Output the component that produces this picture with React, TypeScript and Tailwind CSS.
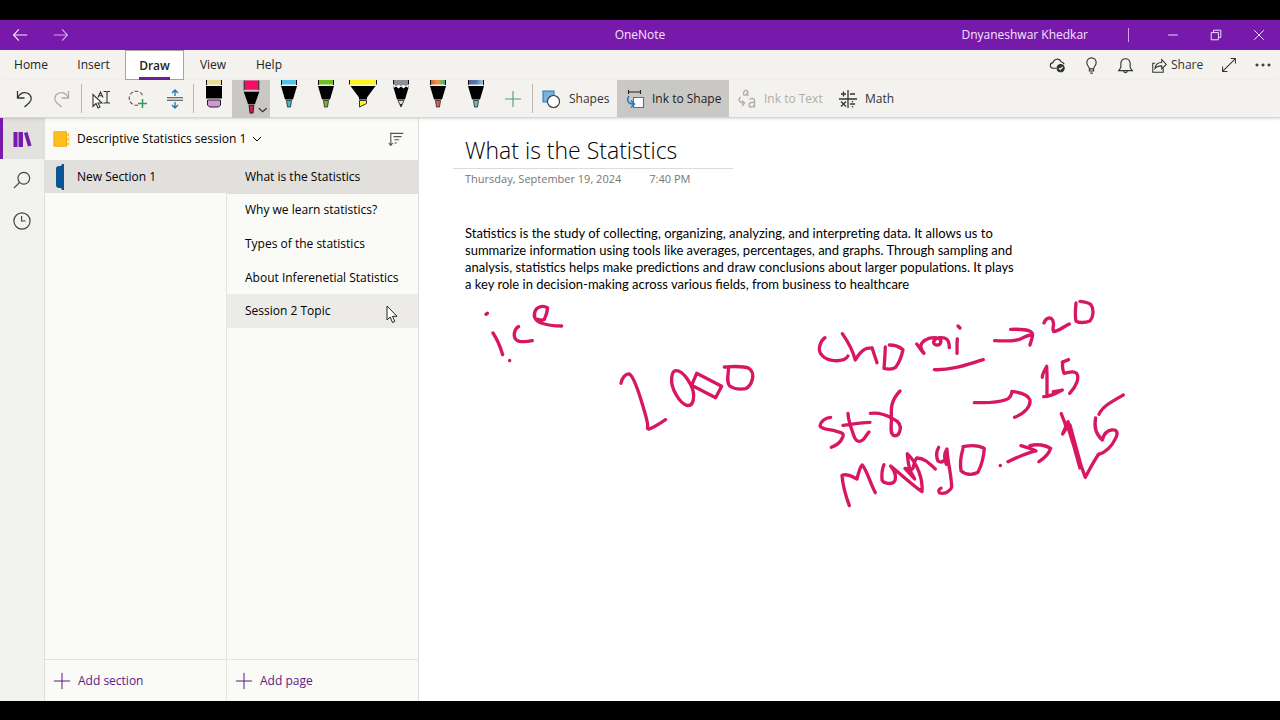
import { useState } from 'react';
import type { ReactNode } from 'react';

const tabs = [
  { label: 'Home', width: 'w-[62px]' },
  { label: 'Insert', width: 'w-[63px]' },
  { label: 'Draw', width: 'w-[59px]' },
  { label: 'View', width: 'w-[58px]' },
  { label: 'Help', width: 'w-[54px]' },
];

const pages = [
  'What is the Statistics',
  'Why we learn statistics?',
  'Types of the statistics',
  'About Inferenetial Statistics',
  'Session 2 Topic',
];

const pens = [
  { name: 'Blue pen', color: '#4fc3e8', tip: '#45b5d0' },
  { name: 'Green pen', color: '#6cc024', tip: '#7cb342' },
  { name: 'Highlighter', color: '#fdf51c', tip: '#fdf51c' },
  { name: 'Pencil', color: '#8a9096', tip: '#555555' },
  { name: 'Rainbow pen', color: 'url(#rainbow)', tip: '#d4644a' },
  { name: 'Galaxy pen', color: 'url(#galaxy)', tip: '#6fb9bd' },
];

interface IconProps {
  size?: number;
  width?: number;
  children: ReactNode;
}

function Icon({ size = 20, width = 1.1, children }: IconProps) {
  return (
    <svg
      width={size}
      height={size}
      viewBox="0 0 20 20"
      fill="none"
      stroke="currentColor"
      strokeWidth={width}
      className="shrink-0"
      aria-hidden="true"
    >
      {children}
    </svg>
  );
}

function Tool({ label, children, className = '' }: { label: string; children: ReactNode; className?: string }) {
  return (
    <button aria-label={label} className={`flex h-full items-center justify-center ${className}`}>
      {children}
    </button>
  );
}

function Pen({ name, color, tip }: { name: string; color: string; tip: string }) {
  const wide = name === 'Highlighter';
  return (
    <svg width="28" height="38" viewBox="0 0 28 38" aria-hidden="true">
      {wide ? (
        <>
          <path d="M1 0h26v4.500H1z" fill={color} />
          <path d="M.5 0v4.500M27.500 0v4.500" stroke="#111" />
          <path d="M1.500 6h25L18 17.500v2h-8v-2z" fill="#000" />
          <path d="M10.500 20.500h7v3l-7 3.500z" fill={color} stroke="#333" />
        </>
      ) : (
        <>
          <path d="M7 0h14v4.500H7z" fill={color} />
          <path d="M6.500 0v5M21.500 0v5" stroke="#111" />
          <path d="M6 6h16l-4 13.500h-8z" fill="#000" />
          {name === 'Pencil' ? (
            <>
              <path d="M6.500 4h15v4L19 6.500 16.500 8.500 14 6.500l-2.500 2L9 6.500 6.500 8z" fill="#fff" />
              <path d="M7 0h14v5l-2 1-2.500-1L14 6l-2.500-1L9 6 7 5z" fill={color} />
              <path d="M11 20.500h6L14 27z" fill="#ddd" stroke="#444" />
              <path d="M13 24h2l-1 3z" fill="#111" />
            </>
          ) : (
            <path d="M11.500 20.500h5l-1 6.500h-3z" fill={tip} stroke="#222" strokeWidth=".8" />
          )}
        </>
      )}
    </svg>
  );
}

function Ribbon() {
  return (
    <div className="relative z-10 flex h-[38px] shrink-0 items-stretch border-b border-[#d6d6d3] bg-[#f3f2ef] pl-[5px] text-[#333] shadow-sm">
      <svg width="0" height="0" className="absolute" aria-hidden="true">
        <linearGradient id="rainbow">
          <stop offset="0" stopColor="#d95c50" />
          <stop offset=".5" stopColor="#e5a13c" />
          <stop offset="1" stopColor="#37a98c" />
        </linearGradient>
        <linearGradient id="galaxy">
          <stop offset="0" stopColor="#6a5c9e" />
          <stop offset=".5" stopColor="#4e78b4" />
          <stop offset="1" stopColor="#a8c6d8" />
        </linearGradient>
      </svg>
      <Tool label="Undo" className="w-[38px]">
        <Icon width={1.3}>
          <path d="M3.500 2v7h7M3.800 8.500C6 4.500 9.500 2.800 13 4c4.500 1.700 5.500 6.500 2.500 9.500L10.500 18" />
        </Icon>
      </Tool>
      <Tool label="Redo" className="w-[38px] text-[#ababab]">
        <Icon width={1.3}>
          <path d="M16.500 2v7h-7M16.200 8.500C14 4.500 10.500 2.800 7 4c-4.500 1.700-5.500 6.500-2.500 9.500L9.500 18" />
        </Icon>
      </Tool>
      <div className="my-1 w-px bg-[#b8b8b5]" />
      <Tool label="Select objects or type text" className="w-[37px]">
        <Icon>
          <path d="M2 5.500v12l3-3 2 4.500 2-1-2-4h4z" fill="#fff" />
          <path d="M7 8.500L9.500 3l2.500 5.500M8 6.800h3M12.500 2.500H15l1 .8.800-.8H19M16 3.300v9.900M12.500 14H15l1-.8.800.8H19" />
        </Icon>
      </Tool>
      <Tool label="Lasso select" className="w-[37px]">
        <Icon>
          <path d="M10 16A7 7 0 1 1 15 7.500" stroke="#555" strokeDasharray="3.500 2" />
          <path d="M14.500 10v9M10 14.500h9" stroke="#35955a" strokeWidth="1.500" />
        </Icon>
      </Tool>
      <Tool label="Insert space" className="w-[37px]">
        <Icon>
          <path d="M2 8.800h16M2 11.200h16" stroke="#444" />
          <path d="M10 7V1.500M7 4l3-3 3 3M10 13v5.500M7 16l3 3 3-3" stroke="#1878b4" strokeWidth="1.300" />
        </Icon>
      </Tool>
      <div className="my-1 mr-px w-px bg-[#b8b8b5]" />
      <div className="grid w-[337px] grid-cols-9">
        <Tool label="Eraser">
          <svg width="28" height="38" viewBox="0 0 28 38" aria-hidden="true">
            <path d="M7 0h14v4.500H7z" fill="#eadb9a" />
            <path d="M6.500 0v5M21.500 0v5" stroke="#111" />
            <path d="M6 6h16v12.500H6z" fill="#000" />
            <path d="M7.500 20h13v5l-2 2h-9l-2-2z" fill="#d594d3" stroke="#222" />
          </svg>
        </Tool>
        <Tool label="Red pen" className="bg-[#c9c8c5]">
          <svg width="37" height="38" viewBox="0 0 38 38" aria-hidden="true">
            <path d="M12 0h14v9.500H12z" fill="#f80a67" />
            <path d="M11.500 0v10M26.500 0v10" stroke="#111" />
            <path d="M11 11.500h16L22.500 24.500h-7z" fill="#000" />
            <path d="M16.500 25.500h5l-1 8h-3z" fill="#c51f4f" stroke="#222" />
            <path d="M26.500 28.500l4 3.500 4-3.500" fill="none" stroke="#333" strokeWidth="1.300" />
          </svg>
        </Tool>
        {pens.map((pen) => (
          <Tool key={pen.name} label={pen.name}>
            <Pen {...pen} />
          </Tool>
        ))}
        <Tool label="Add pen" className="text-[#4f9c70]">
          <Icon>
            <path d="M10 2v16M2 10h16" />
          </Icon>
        </Tool>
      </div>
      <div className="my-1 w-px bg-[#b8b8b5]" />
      <button className="flex w-[84px] items-center gap-2 pl-2">
        <Icon>
          <path d="M2 2h11v11H2z" fill="#78b3dc" stroke="#2b7cb8" />
          <circle cx="12.500" cy="12.500" r="6" fill="#fff" />
        </Icon>
        Shapes
      </button>
      <button className="flex w-[112px] items-center gap-[7px] bg-[#c9c8c5] pl-2 text-[#222]">
        <Icon>
          <path d="M3.500 3h12M3.500 1v4M15.500 1v4" />
          <path d="M8.500 8.500h10v10h-10z" fill="#fff" stroke="#2b7cb8" />
          <path d="M4 7c-3 4-1 8 5 8M6 11.500L9.500 15 6 18.500" stroke="#2b7cb8" strokeWidth="1.500" />
        </Icon>
        Ink to Shape
      </button>
      <button className="flex w-[101px] items-center gap-[7px] pl-2 text-[#adadad]">
        <Icon width={1.4}>
          <path d="M11 3C9-.5 6.500 2 6.500 4.500s2 2.500 3.500 0l1-2.500-.8 4 1.300.5M3.500 8c-3 3-1 6 3.500 6M5 11.500L7.500 14 5 17M12.500 10.500c2-2 5-1 5 1v7M17.500 13.500c-4-.5-5.500.5-5.500 2.300 0 3 4 2.700 5.500.5" />
        </Icon>
        Ink to Text
      </button>
      <button className="flex items-center gap-[7px] pl-2">
        <Icon width={1.3}>
          <path d="M10 1v18M1 10h18M3 5h5M5.500 2.500v5M12 5h5M3 12.500l5 5M8 12.500l-5 5M12 15h5M14.500 12v1.200M14.500 17v1.200" />
        </Icon>
        Math
      </button>
    </div>
  );
}

// Ink keeps the coordinates of the pen strokes, three units to a pixel.
function Ink() {
  return (
    <svg
      width="861"
      height="583"
      viewBox="419 118 861 583"
      className="pointer-events-none absolute top-0 left-0"
      fill="none"
      stroke="#d81763"
      strokeWidth="10"
      strokeLinecap="round"
      strokeLinejoin="round"
      role="img"
      aria-label="Ink drawing"
    >
      <g transform="translate(470 290) scale(.3333)">
        <path d="M48 73l4-3M69 129c12 18 20 35 29 65M119 211v1" />
        <path d="M146 110c-10 3-17 23-11 35 8 13 33 11 52 7" />
        <path d="M203 88c10 3 15 4 20 0 5-11 9-24 10-34-12-8-30-6-37 8-7 16-2 30 17 37 20 7 38 9 62 9" />
        <path d="M453 280c2-16 15-30 25-28 20 10 55 144 55 154 0 7-3 12 5 11 14-5 30-16 49-28" />
        <path d="M618 242c24 0 53 48 53 75 0 22-6 30-18 30-26-7-51-55-48-82 1-13 4-23 13-23z" />
        <path d="M680 250l75 39-18 34-72-37zM763 231c18-1 53-5 74 4 23 16 7 53-10 61-18 3-38-1-48-8-10-13-5-30-3-52" />
      </g>
      <g transform="translate(800 290) scale(.3333)">
        <path d="M584 152c37 2 69-1 79-6 13-6 19-10 30-11M632 118c28-1 47 1 57 5 18 7 3 29 1 42M732 99c6-17 21-18 25-10 10 15-3 24 4 36 14-1 29-14 47-23M828 39c-1 18-4 36 0 54 7 7 29 5 42 0 9-10 14-35 2-50-9-7-20-8-32-9" />
        <path d="M727 262c-1-8 8-22 13-33 2 22 1 57 1 90M731 320c14 0 29-5 56-20M760 305l20-3M787 217l19-8M789 215c-4 13-2 20 3 35 13-2 28-10 38 0 10 15-3 41-21 60" />
        <path d="M523 338c51 1 85-2 103-13 10-9 8-14 10-21 22 3 49 10 54 26 2 18-13 39-46 52" />
      </g>
      <g transform="translate(815 325) scale(.3333)">
        <path d="M30 38c-14 10-22 34-13 48 14 21 46 25 69 18 8-4 11-6 13-11M82 26c14 20 31 49 39 79 8-14 15-26 30-33 8-4 15-1 20-4l15 45" />
        <path d="M211 66c-1 24-2 45-4 64 12 3 28 2 35-3 11-15 18-33 22-53-12-10-26-14-41-14" />
        <path d="M305 57c8 7 12 20 22 28-8-11-13-21-7-30 12-15 34-21 52-15 11 8 4 22-7 20-15-2-11-19 8-22 20-2 30 4 30 30M427 42c-2 15 0 28-1 43M429 3l6 6M358 134c54 2 96-15 147-30" />
        <path d="M47 277c-17 1-31 14-32 26 6 12 29 9 50 16 17 4 24 7 17 20-5 12-18 22-33 28M99 265c1 24 10 44 17 66 5 16 15 24 28 13 9-8 11-17 18-23M84 301c24-2 50-9 81-9M166 265c22-3 45 3 65 15 20 9 28 21 24 36-3 13-8 18-18 16-11-5-9-21-8-38 2-32-9-60 26-96" />
        <path d="M103 542c-12-33-20-62-22-91 20-7 32 5 45 11 4-17 9-38 16-42 15 18 24 57 39 83M207 419c-6 13-7 31-6 46 6 12 29 13 36 6 7-8 7-30-10-48 31 25 63 56 94 77 3-36-12-82-44-114 2 25 4 49 22 76l-29-32c11 2 18 8 24 0 3-11 5-24 11-31 23-1 40 18 56 33" />
        <path d="M371 367c-9 15-7 29-2 41 11 8 22-1 27-15v-20c2 39 14 81 14 114-6 14-23 21-36 17-4-6-4-10 4-14M396 372c-12 17-6 31-2 46" />
        <path d="M444 371c-7 23-9 46-6 66 12 13 35 14 51 5 12-24 17-45 19-72-17-10-39-10-64-5" />
      </g>
      <g transform="translate(800 390) scale(.3333)">
        <path d="M601 226v1M624 215c32-15 61-27 84-32-14-8-29-11-45-16M690 167c22-6 47-2 62 8-5 17-16 28-35 40" />
        <path d="M784 71c6 18 14 31 14 43-2 8-7 12-10 18l13-30c14 43 29 94 39 132M804 95c13 49 30 109 52 167 14-26 25-48 40-69M810 105l34 125" />
        <path d="M887 84c-5 25 1 49 20 66 4-16 14-28 27-30 19-3 20 10 14 23-11 24-28 43-53 51M897 73c10-23 36-37 73-58" />
      </g>
    </svg>
  );
}

export default function App() {
  const [activeTab, setActiveTab] = useState('Draw');
  const [activePage, setActivePage] = useState(pages[0]);

  return (
    <div className="flex h-screen flex-col overflow-hidden bg-black pt-5 pb-[19px] font-['Open_Sans',sans-serif] text-xs text-[#222]">
      <header className="relative flex h-[30px] shrink-0 items-center bg-[#7719aa] text-[#f5e4ff]">
        <Tool label="Back" className="w-10">
          <Icon size={16}>
            <path d="M19 10H2M8.500 3L2 10l6.500 7" strokeWidth="1.500" />
          </Icon>
        </Tool>
        <Tool label="Forward" className="w-[42px] text-[#d7a5ef]">
          <Icon size={16}>
            <path d="M1 10h17M11.500 3l6.500 7-6.500 7" strokeWidth="1.500" />
          </Icon>
        </Tool>
        <h1 className="absolute left-1/2 -translate-x-1/2">OneNote</h1>
        <span className="ml-auto">Dnyaneshwar Khedkar</span>
        <div className="mr-[22px] ml-10 h-3.5 w-px bg-[#d7a5ef]" />
        <Tool label="Minimize" className="w-[43px]">
          <Icon size={12}>
            <path d="M2 10h16" strokeWidth="1.600" />
          </Icon>
        </Tool>
        <Tool label="Restore" className="w-[43px]">
          <Icon size={12}>
            <path d="M2 6h12v12H2zM6 6V2h12v12h-4" strokeWidth="1.600" />
          </Icon>
        </Tool>
        <Tool label="Close" className="w-[43px]">
          <Icon size={12}>
            <path d="M2 2l16 16M18 2L2 18" strokeWidth="1.600" />
          </Icon>
        </Tool>
      </header>

      <nav className="flex h-[30px] shrink-0 items-stretch bg-[#f3f2ef]">
        {tabs.map((tab) => (
          <button
            key={tab.label}
            onClick={() => setActiveTab(tab.label)}
            className={`${tab.width} ${
              tab.label === activeTab ? 'border border-[#a5a5a5] bg-white font-semibold' : ''
            } flex items-center justify-center`}
          >
            <span className={tab.label === activeTab ? 'border-b-3 border-[#6b1f9c] pt-1 leading-[23px]' : ''}>
              {tab.label}
            </span>
          </button>
        ))}
        <div className="ml-auto flex items-center text-[#333]">
          <Tool label="Sync" className="w-[34px]">
            <Icon size={16} width={1.4}>
              <path d="M9 14H5c-4.500-.5-4.500-6.500 0-7C6 2 13 1 15 6c2 .3 3.500 1.500 4 3" />
              <circle cx="14.500" cy="14" r="4.500" fill="#333" />
              <path d="M12.500 14l1.500 1.500 3-3" stroke="#fff" />
            </Icon>
          </Tool>
          <Tool label="Tell me" className="w-[34px]">
            <Icon size={17} width={1.3}>
              <path d="M7.500 14c0-3-3-3.500-3-7.500a5.500 5.500 0 0 1 11 0c0 4-3 4.500-3 7.500zM7.500 14v2.500h5V14M8.500 19h3" />
            </Icon>
          </Tool>
          <Tool label="Notifications" className="w-[34px]">
            <Icon size={17} width={1.3}>
              <path d="M2 16h16l-2.500-3.500V8C15.500 0 4.500 0 4.500 8v4.500zM8 16c0 3.300 4 3.300 4 0" />
            </Icon>
          </Tool>
          <button className="flex h-full w-[70px] items-center gap-1 pl-2.5">
            <Icon size={15} width={1.4}>
              <path d="M4 7H1v12h14v-5M4 14c.5-5 4-8 9-8V2l6 6.500-6 6v-4c-4 0-7 1-9 3.500z" />
            </Icon>
            Share
          </button>
          <Tool label="Full screen" className="w-[34px]">
            <Icon size={16} width={1.3}>
              <path d="M2 18L18 2M12 2h6v6M2 12v6h6" />
            </Icon>
          </Tool>
          <Tool label="More" className="w-[34px]">
            <Icon size={16}>
              <g fill="currentColor">
                <circle cx="2.500" cy="10" r="1.400" />
                <circle cx="10" cy="10" r="1.400" />
                <circle cx="17.500" cy="10" r="1.400" />
              </g>
            </Icon>
          </Tool>
        </div>
      </nav>

      <Ribbon />

      <div className="flex min-h-0 flex-1 bg-white">
        <aside className="w-[45px] shrink-0 border-r border-[#dededa] bg-[#f2f2ee] text-[#444]">
          <Tool label="Notebooks" className="h-[41px]! w-full border-l-3 border-[#7719aa] bg-[#e2e1de] pr-[3px] text-[#7719aa]">
            <Icon>
              <g fill="currentColor" stroke="none">
                <path d="M1.500 3h4v15h-4zM6.500 3h4.500v15H6.500zM12 4l3.500-1 4 13.500-3.500 1z" />
              </g>
            </Icon>
          </Tool>
          <Tool label="Search" className="h-[41px]! w-full">
            <Icon size={18} width={1.3}>
              <circle cx="12" cy="8" r="6.500" />
              <path d="M7.500 12.500L1 19" />
            </Icon>
          </Tool>
          <Tool label="Recent notes" className="h-[41px]! w-full">
            <Icon size={18} width={1.3}>
              <circle cx="10" cy="10" r="9" />
              <path d="M9.500 4.500V10h4.500" />
            </Icon>
          </Tool>
        </aside>

        <section className="flex w-[374px] shrink-0 flex-col border-r border-[#dededa] bg-[#fafaf6] text-black">
          <div className="flex h-[42px] shrink-0 items-center pr-[14px] pl-2">
            <Icon size={18}>
              <path d="M1 2h14v16H1z" fill="#fdbf1d" stroke="#f0a818" />
              <path d="M16 4h2v3h-2zM16 9h2v3h-2zM16 14h2v3h-2z" fill="#fdbf1d" stroke="none" />
            </Icon>
            <button className="ml-1.5 flex items-center gap-1.5 font-medium">
              Descriptive Statistics session 1
              <Icon size={10} width={2}>
                <path d="M2 6l8 8 8-8" />
              </Icon>
            </button>
            <button aria-label="Sort" className="ml-auto text-[#555]">
              <Icon size={16}>
                <path d="M3.500 2v16M1 15l2.500 3L6 15M3.500 3H19M7 7h10M8 11h6M8 15h3" strokeWidth="1.400" />
              </Icon>
            </button>
          </div>
          <div className="flex min-h-0 flex-1">
            <div className="flex w-[182px] flex-col border-r border-[#e4e4e0]">
              <button className="flex h-[33px] items-center gap-3 bg-[#e1e0dc] pl-2.5">
                <svg width="10" height="26" viewBox="0 0 10 26" aria-hidden="true">
                  <path d="M9 0v26H7l-1-2H4c-2 0-3-1-3-3V5c0-2 1-3 3-3h2l1-2z" fill="#0b5590" />
                </svg>
                New Section 1
              </button>
              <button className="mt-auto flex h-[42px] items-center gap-[7px] border-t border-[#e4e4e0] pl-2 font-medium text-[#5e1985]">
                <Icon size={18}>
                  <path d="M10 1v18M1 10h18" />
                </Icon>
                Add section
              </button>
            </div>
            <div className="flex flex-1 flex-col">
              <div className="grid h-[168px] grid-rows-5">
                {pages.map((page) => (
                  <button
                    key={page}
                    onClick={() => setActivePage(page)}
                    className={`relative flex items-center pl-[18px] text-left ${
                      page === activePage ? 'bg-[#e1e0dc]' : page === 'Session 2 Topic' ? 'bg-[#ecebe8]' : ''
                    }`}
                  >
                    {page}
                    {page === 'Session 2 Topic' && (
                      <svg width="12" height="19" viewBox="0 0 12 19" className="absolute top-[11px] right-5" aria-hidden="true">
                        <path d="M1 1v14l3.200-3 2.300 5.500 2.300-1-2.300-5.200H11z" fill="#fff" stroke="#222" />
                      </svg>
                    )}
                  </button>
                ))}
              </div>
              <button className="mt-auto flex h-[42px] items-center gap-[7px] border-t border-[#e4e4e0] pl-2 font-medium text-[#5e1985]">
                <Icon size={18}>
                  <path d="M10 1v18M1 10h18" />
                </Icon>
                Add page
              </button>
            </div>
          </div>
        </section>

        <main className="relative min-w-0 flex-1 overflow-hidden pl-[34px] text-black">
          <h2 className="w-[280px] border-b border-[#dcdcdc] pt-4 pb-0.5 pl-3 text-[23px] leading-8 font-light">
            What is the Statistics
          </h2>
          <div className="flex gap-7 pt-0.5 pl-3 text-[11px] leading-4 text-[#767676]">
            <span>Thursday, September 19, 2024</span>
            <span>7:40 PM</span>
          </div>
          <p className="mt-[38px] pl-3 font-[Lato,sans-serif] text-[13px] leading-[17px]">
            Statistics is the study of collecting, organizing, analyzing, and interpreting data. It allows us to
            <br />
            summarize information using tools like averages, percentages, and graphs. Through sampling and
            <br />
            analysis, statistics helps make predictions and draw conclusions about larger populations. It plays
            <br />
            a key role in decision-making across various fields, from business to healthcare
          </p>
          <Ink />
        </main>
      </div>
    </div>
  );
}
